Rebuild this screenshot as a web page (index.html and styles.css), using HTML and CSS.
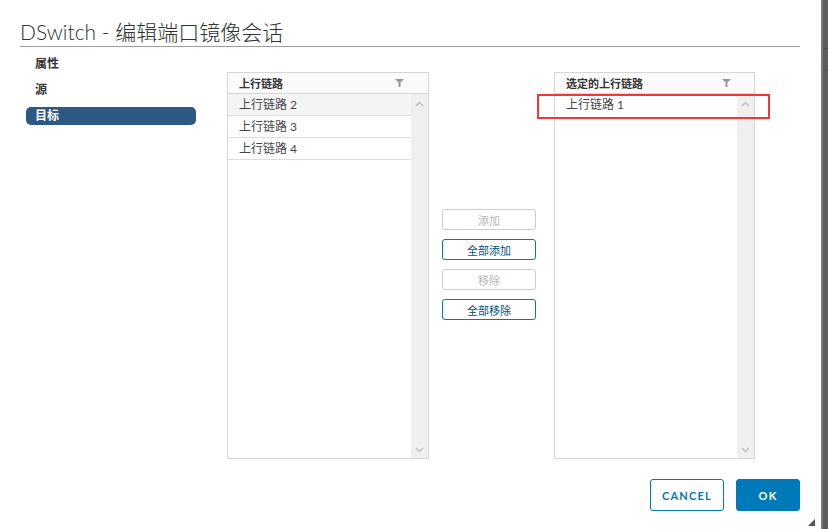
FILE: index.html
```html
<!DOCTYPE html>
<html>
<head>
<meta charset="utf-8">
<title>DSwitch - 编辑端口镜像会话</title>
<link rel="stylesheet" href="styles.css">
</head>
<body>
<div class="screen">
  <div class="dialog">
    <div class="dialog-header">
      <h1 class="title">DSwitch - 编辑端口镜像会话</h1>
    </div>
    <div class="dialog-body">
      <nav class="steps">
        <div class="step">属性</div>
        <div class="step">源</div>
        <div class="step active">目标</div>
      </nav>
      <div class="transfer">
        <div class="panel panel-left">
          <div class="panel-head">
            <span>上行链路</span>
            <svg class="filter" width="9" height="8" viewBox="0 0 9 8"><path d="M0 0H9L5.5 3.5V8H3.5V3.5Z" fill="#9a9a9a"/></svg>
          </div>
          <div class="panel-body">
            <div class="rows">
              <div class="row row-hover">上行链路 2</div>
              <div class="row">上行链路 3</div>
              <div class="row">上行链路 4</div>
            </div>
            <div class="scrollbar">
              <svg width="9" height="6" viewBox="0 0 9 6"><path d="M1 5L4.5 1.5L8 5" fill="none" stroke="#c3c3c3" stroke-width="1.6"/></svg>
              <svg width="9" height="6" viewBox="0 0 9 6"><path d="M1 1L4.5 4.5L8 1" fill="none" stroke="#c3c3c3" stroke-width="1.6"/></svg>
            </div>
          </div>
        </div>
        <div class="actions">
          <button class="btn-move" disabled>添加</button>
          <button class="btn-move">全部添加</button>
          <button class="btn-move" disabled>移除</button>
          <button class="btn-move">全部移除</button>
        </div>
        <div class="panel panel-right">
          <div class="panel-head">
            <span>选定的上行链路</span>
            <svg class="filter" width="9" height="8" viewBox="0 0 9 8"><path d="M0 0H9L5.5 3.5V8H3.5V3.5Z" fill="#9a9a9a"/></svg>
          </div>
          <div class="panel-body">
            <div class="rows">
              <div class="row row-plain">上行链路 1</div>
            </div>
            <div class="scrollbar">
              <svg width="9" height="6" viewBox="0 0 9 6"><path d="M1 5L4.5 1.5L8 5" fill="none" stroke="#c3c3c3" stroke-width="1.6"/></svg>
              <svg width="9" height="6" viewBox="0 0 9 6"><path d="M1 1L4.5 4.5L8 1" fill="none" stroke="#c3c3c3" stroke-width="1.6"/></svg>
            </div>
          </div>
          <div class="highlight"></div>
        </div>
      </div>
    </div>
    <div class="dialog-footer">
      <button class="btn btn-outline">CANCEL</button>
      <button class="btn btn-primary">OK</button>
    </div>
    <div class="grip"></div>
  </div>
  <div class="backdrop"></div>
</div>
</body>
</html>
```

FILE: styles.css
```css
* { box-sizing: border-box; }
html, body { margin: 0; padding: 0; background: #fff; }
body {
  font-family: "Lato", "Noto Sans CJK SC", sans-serif;
  color: #333;
}
.screen {
  display: flex;
  width: 828px;
  height: 529px;
  overflow: hidden;
}
.dialog {
  position: relative;
  flex: 1;
  display: flex;
  flex-direction: column;
  background: #fff;
}
.backdrop {
  width: 7px;
  border-left: 2px solid #7a7a7a;
  background:
    linear-gradient(#5c5c5c 0 48px, #4f4f4f 48px 49px, #5c5c5c 49px 70px, #4f4f4f 70px 71px, #5c5c5c 71px);
}
.dialog-header {
  margin: 0 21px 0 20px;
  padding-top: 18px;
  border-bottom: 1px solid #9c9c9c;
}
.title {
  margin: 0;
  font-size: 21px;
  line-height: 28px;
  font-weight: 300;
  color: #313131;
  font-family: "Lato", "Noto Sans CJK SC", sans-serif;
}
.dialog-body {
  display: flex;
  padding-left: 26px;
}
.steps {
  width: 170px;
  padding-top: 8px;
  display: flex;
  flex-direction: column;
  gap: 8px;
}
.step {
  height: 18px;
  line-height: 18px;
  padding-left: 9px;
  font-size: 12px;
  font-weight: 700;
  color: #333;
  border-radius: 5px;
}
.step.active {
  background: #2c5883;
  color: #fff;
}
.transfer {
  margin-left: 31px;
  margin-top: 25px;
  display: flex;
  align-items: center;
}
.panel {
  position: relative;
  height: 387px;
  border: 1px solid #d6d6d6;
  display: flex;
  flex-direction: column;
}
.panel-left { width: 202px; }
.panel-right { width: 201px; }
.panel-head {
  height: 21px;
  flex: none;
  display: flex;
  align-items: center;
  justify-content: space-between;
  padding: 0 24px 0 11px;
  background: #fafafa;
  border-bottom: 1px solid #d6d6d6;
  font-size: 11px;
  font-weight: 700;
  color: #333;
}
.panel-right .panel-head { padding-right: 23px; }
.filter { display: block; }
.panel-body {
  flex: 1;
  display: flex;
}
.rows { flex: 1; }
.row {
  height: 22px;
  line-height: 21px;
  padding-left: 11px;
  border-bottom: 1px solid #dcdcdc;
  font-size: 12px;
  color: #464646;
}
.row-hover { background: #f4f4f4; }
.row-plain { border-bottom-color: transparent; }
.scrollbar {
  width: 17px;
  background: #efefef;
  display: flex;
  flex-direction: column;
  justify-content: space-between;
  align-items: center;
  padding: 7px 0 5px;
}
.scrollbar svg { display: block; }
.highlight {
  position: absolute;
  left: -18px;
  top: 21px;
  width: 233px;
  height: 25px;
  border: 2px solid #f2373a;
}
.actions {
  width: 94px;
  margin: 0 18px 0 13px;
  padding-bottom: 2px;
  display: flex;
  flex-direction: column;
  gap: 9px;
}
.btn-move {
  height: 21px;
  padding: 0;
  border: 1px solid #0079b8;
  border-radius: 3px;
  background: #fff;
  font-family: "Lato", "Noto Sans CJK SC", sans-serif;
  font-size: 11px;
  color: #00507c;
}
.btn-move:disabled {
  border-color: #cdcdcd;
  color: #b5b5b5;
}
.dialog-footer {
  display: flex;
  justify-content: flex-end;
  gap: 12px;
  margin-top: 20px;
  padding-right: 21px;
}
.btn {
  height: 32px;
  padding: 0;
  border-radius: 3px;
  font-family: "Lato", sans-serif;
  font-size: 11px;
  font-weight: 700;
  letter-spacing: 1.2px;
}
.btn-outline {
  width: 74px;
  border: 1px solid #0079b8;
  background: #fff;
  color: #0079b8;
}
.btn-primary {
  width: 64px;
  border: 1px solid #0079b8;
  background: #0079b8;
  color: #fff;
}
.grip {
  position: absolute;
  right: 6px;
  bottom: 3px;
  width: 0;
  height: 0;
  border-left: 7px solid transparent;
  border-bottom: 7px solid #555;
}
```
